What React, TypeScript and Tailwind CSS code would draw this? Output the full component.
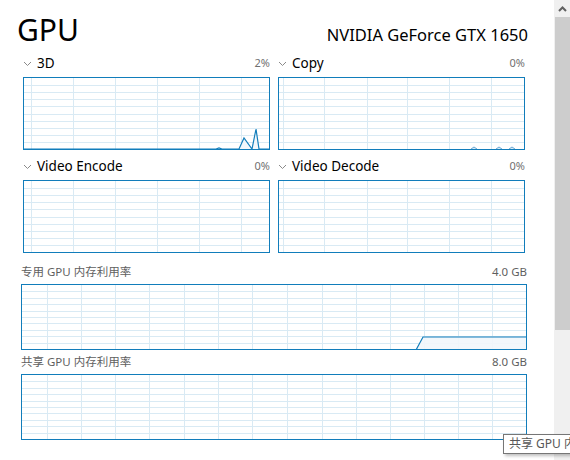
const FONT = "font-['Noto_Sans','Noto_Sans_CJK_SC',sans-serif]";

type ChartProps = {
  w: number;
  h: number;
  cols: number[];
  rows: number;
  line?: [number, number][];
  bumps?: number[];
};

function Chart({ w, h, cols, rows, line, bumps }: ChartProps) {
  const rowH = (h - 2) / rows;
  return (
    <svg width={w} height={h} className="block">
      <rect x={0} y={0} width={w} height={h} fill="white" />
      {Array.from({ length: rows - 1 }).map((_, i) => (
        <line key={"r" + i} x1={1} x2={w - 1} y1={Math.round(1 + rowH * (i + 1)) + 0.5} y2={Math.round(1 + rowH * (i + 1)) + 0.5} stroke="#d9eaf4" strokeWidth={1} />
      ))}
      {cols.map((x) => (
        <line key={"c" + x} x1={x + 0.5} x2={x + 0.5} y1={1} y2={h - 1} stroke="#d9eaf4" strokeWidth={1} />
      ))}
      {line && (
        <>
          <polygon points={[...line, [line[line.length - 1][0], h - 1], [line[0][0], h - 1]].map((p) => p.join(",")).join(" ")} fill="#f1f6fb" fillOpacity={0.9} />
          <polyline points={line.map((p) => p.join(",")).join(" ")} fill="none" stroke="#117dbb" strokeWidth={1.2} />
        </>
      )}
      {bumps?.map((x) => (
        <polyline key={"b" + x} points={`${x - 3},${h - 1} ${x},${h - 3} ${x + 3},${h - 1}`} fill="#d9eaf4" stroke="#6aa9d6" strokeWidth={1} />
      ))}
      <rect x={0.5} y={0.5} width={w - 1} height={h - 1} fill="none" stroke="#117dbb" strokeWidth={1} />
    </svg>
  );
}

function Chevron() {
  return (
    <svg width="9" height="6" viewBox="0 0 9 6" className="mr-[5px] mt-[1px]">
      <polyline points="1,1 4.5,4.5 8,1" fill="none" stroke="#8a8a8a" strokeWidth="1" />
    </svg>
  );
}

function SmallPanel({ title, value, cols, line, bumps }: { title: string; value: string; cols: number[]; line?: [number, number][]; bumps?: number[] }) {
  return (
    <div className="flex flex-col">
      <div className="flex h-[27px] items-center justify-between">
        <div className="flex items-center">
          <Chevron />
          <span className="text-[13.5px] text-black">{title}</span>
        </div>
        <span className="text-[11px] text-[#707070]">{value}</span>
      </div>
      <Chart w={247} h={73} cols={cols} rows={10} line={line} bumps={bumps} />
    </div>
  );
}

const bigCols = [26, 60, 94, 128, 163, 197, 231, 266, 301, 335, 369, 403, 437, 471];

export default function App() {
  return (
    <div className={`relative flex h-[460px] w-[570px] overflow-hidden bg-white ${FONT}`}>
      <div className="flex w-[554px] flex-col">
        {/* header */}
        <div className="flex h-[50px] items-end justify-between pl-[17px] pr-[26px]">
          <span className="text-[30px] leading-[40px] text-black">GPU</span>
          <span className="pb-[3px] text-[16.5px] leading-[24px] text-black">NVIDIA GeForce GTX 1650</span>
        </div>

        {/* engines */}
        <div className="ml-[23px] grid w-[502px] grid-cols-2 gap-x-[8px]">
          <SmallPanel
            title="3D"
            value="2%"
            cols={[8, 50, 92, 134, 176, 218]}
            line={[[1, 72], [193, 72], [196, 71], [199, 72], [216, 72], [221, 61], [229, 72], [233, 52], [236, 72], [246, 72]]}
          />
          <SmallPanel title="Copy" value="0%" cols={[5, 46, 89, 129, 171, 213]} bumps={[196, 221, 234]} />
          <div className="mt-[3px]">
            <SmallPanel title="Video Encode" value="0%" cols={[8, 50, 92, 134, 176, 218]} />
          </div>
          <div className="mt-[3px]">
            <SmallPanel title="Video Decode" value="0%" cols={[5, 46, 89, 129, 171, 213]} />
          </div>
        </div>

        {/* memory */}
        <div className="ml-[21px] flex w-[506px] flex-col">
          <div className="flex h-[31px] items-end justify-between pb-[4px] text-[11.5px] leading-[16px] text-[#5f5f5f]">
            <span>专用 GPU 内存利用率</span>
            <span>4.0 GB</span>
          </div>
          <Chart w={506} h={66} cols={bigCols} rows={10} line={[[395, 66], [402, 53], [505, 53]]} />
          <div className="flex h-[24px] items-end justify-between pb-[4px] text-[11.5px] leading-[16px] text-[#5f5f5f]">
            <span>共享 GPU 内存利用率</span>
            <span>8.0 GB</span>
          </div>
          <Chart w={506} h={66} cols={bigCols} rows={10} />
        </div>
      </div>

      {/* scrollbar */}
      <div className="flex w-[16px] flex-col bg-[#f0f0f0]">
        <div className="flex h-[17px] items-center justify-center">
          <svg width="9" height="6" viewBox="0 0 9 6">
            <polyline points="1,5 4.5,1.5 8,5" fill="none" stroke="#606060" strokeWidth="2" />
          </svg>
        </div>
        <div className="ml-px h-[313px] w-[15px] bg-[#cdcdcd]" />
      </div>

      {/* tooltip */}
      <div className="absolute left-[503px] top-[434px] h-[20px] w-[120px] overflow-hidden whitespace-nowrap border border-[#767676] bg-white pl-[5px] text-[12px] leading-[18px] text-[#575757] shadow-[2px_2px_3px_rgba(0,0,0,0.25)]">
        共享 GPU 内存利用率
      </div>
    </div>
  );
}
